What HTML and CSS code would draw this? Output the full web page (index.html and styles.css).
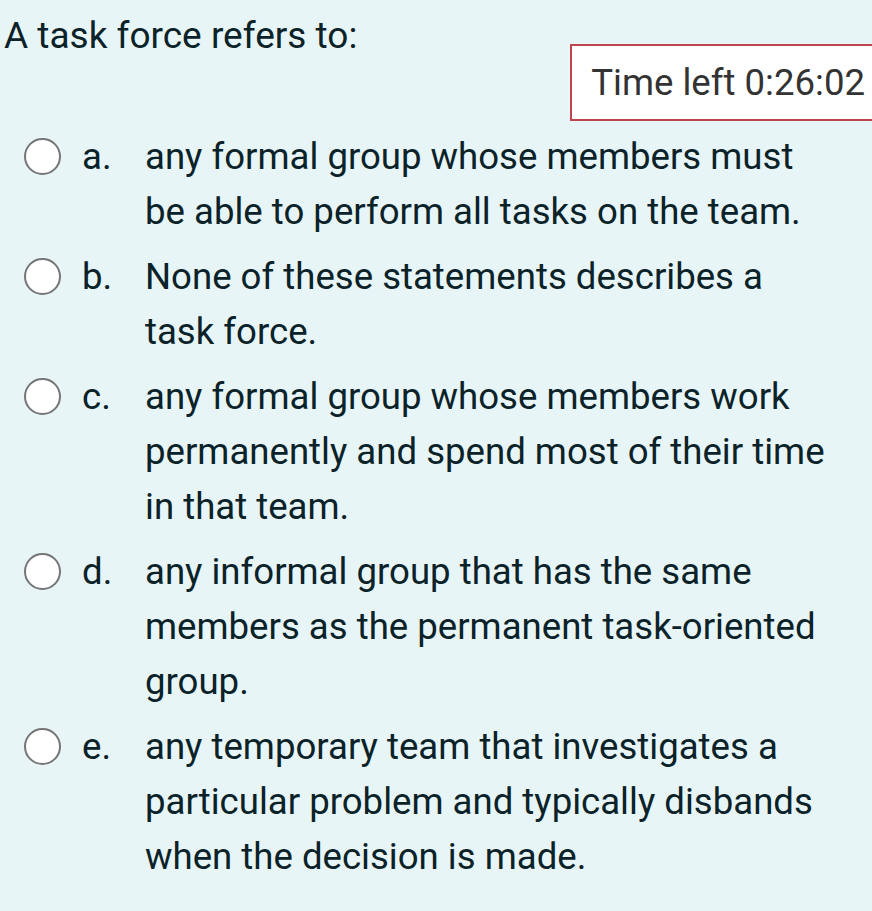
FILE: index.html
```html
<!DOCTYPE html>
<html lang="en">
<head>
    <meta charset="UTF-8">
    <title>Quiz question</title>
    <link rel="stylesheet" href="styles.css">
</head>
<body>
    <div class="question">
        <h2 class="qtext">A task force refers to:</h2>
        <div class="timer-row">
            <div class="timer">Time left 0:26:02</div>
        </div>

        <div class="answers">
            <label class="answer">
                <span class="radio"></span>
                <span class="letter">a.</span>
                <span class="text">any formal group whose members must be able to perform all tasks on the team.</span>
            </label>
            <label class="answer">
                <span class="radio"></span>
                <span class="letter">b.</span>
                <span class="text">None of these statements describes a task force.</span>
            </label>
            <label class="answer">
                <span class="radio"></span>
                <span class="letter">c.</span>
                <span class="text">any formal group whose members work permanently and spend most of their time in that team.</span>
            </label>
            <label class="answer">
                <span class="radio"></span>
                <span class="letter">d.</span>
                <span class="text">any informal group that has the same members as the permanent task-oriented group.</span>
            </label>
            <label class="answer">
                <span class="radio"></span>
                <span class="letter">e.</span>
                <span class="text">any temporary team that investigates a particular problem and typically disbands when the decision is made.</span>
            </label>
        </div>
    </div>
</body>
</html>
```

FILE: styles.css
```css
* { margin: 0; padding: 0; box-sizing: border-box; }
html { overflow: hidden; }
body { background: #e7f5f7; color: #0b2229; font-family: 'Roboto', 'Liberation Sans', sans-serif; }

.question { padding: 14px 0 0 4px; }
.qtext { font-size: 37px; font-weight: 400; line-height: 44px; }

.timer-row { display: flex; justify-content: flex-end; margin-top: -14px; margin-right: -30px; }
.timer { background: #fff; border: 2px solid #c0444e; color: #333; font-size: 36.6px; line-height: 73px; padding: 0 35px 0 19px; }

.answers { margin-top: 8px; }
.answer { display: flex; align-items: flex-start; padding: 0 0 10px 20px; font-size: 36.6px; line-height: 55px; }
.radio { flex: none; width: 37px; height: 37px; margin-top: 9px; border: 2px solid #757575; border-radius: 50%; background: #fff; }
.letter { flex: none; width: 63px; margin-left: 21px; }
.text { width: 688px; }
```
